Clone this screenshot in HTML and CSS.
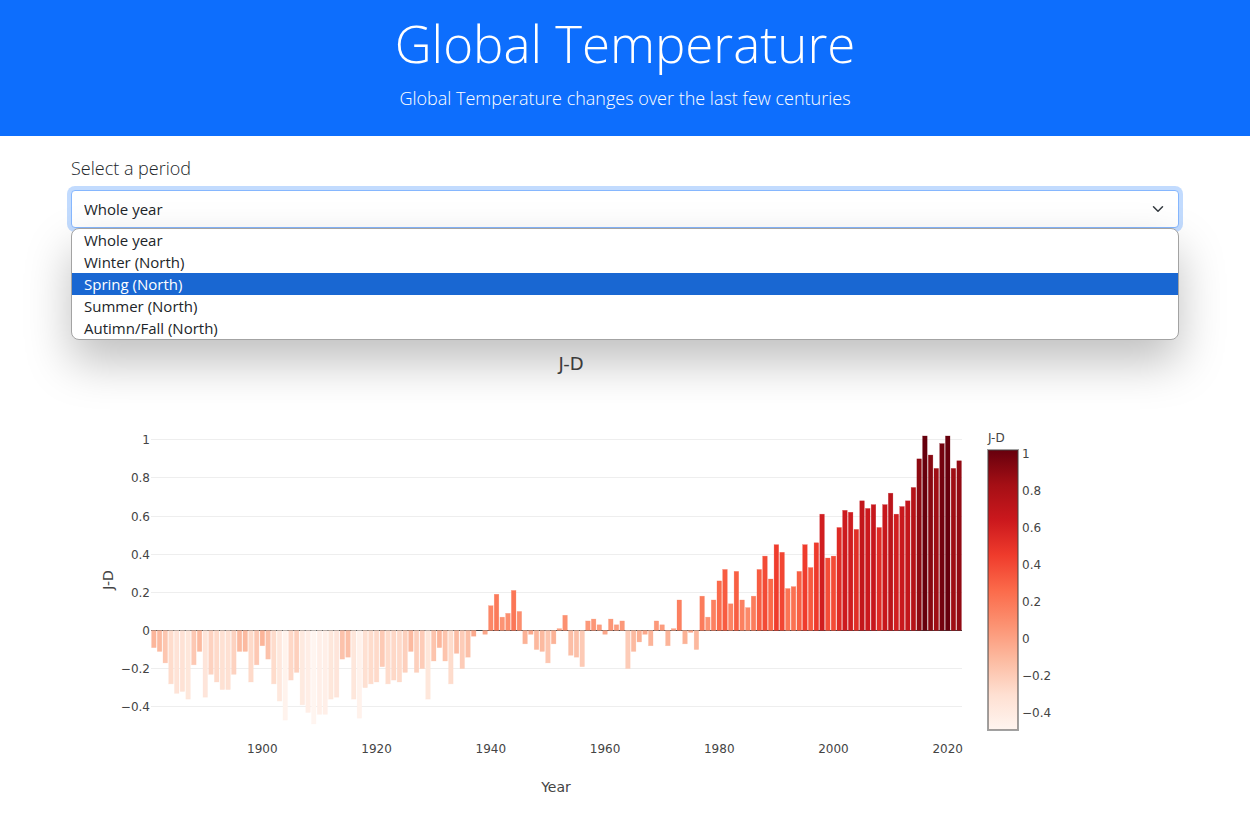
FILE: index.html
```html
<!DOCTYPE html>
<html lang="en">
<head>
  <meta charset="UTF-8" />
  <meta name="viewport" content="width=device-width, initial-scale=1.0" />
  <title>Global Temperature</title>
  <link rel="stylesheet" href="styles.css">
</head>
<body>
  <header class="hero">
    <h1>Global Temperature</h1>
    <p>Global Temperature changes over the last few centuries</p>
  </header>

  <main class="container">
    <label class="period-label" for="period">Select a period</label>
    <div class="period">
      <select id="period" name="period" class="period-select">
        <option selected>Whole year</option>
        <option>Winter (North)</option>
        <option>Spring (North)</option>
        <option>Summer (North)</option>
        <option>Autimn/Fall (North)</option>
      </select>
      <svg class="chevron" viewBox="0 0 16 16" aria-hidden="true"><path d="m2 5 6 6 6-6"/></svg>
      <ul class="options" role="listbox" aria-label="Select a period">
        <li role="option">Whole year</li>
        <li role="option">Winter (North)</li>
        <li role="option" class="active" aria-selected="true">Spring (North)</li>
        <li role="option">Summer (North)</li>
        <li role="option">Autimn/Fall (North)</li>
      </ul>
    </div>

    <svg id="chart" class="chart" viewBox="0 0 1000 500" role="img" aria-label="J-D by year">
      <defs>
        <linearGradient id="reds" x1="0" y1="1" x2="0" y2="0"></linearGradient>
      </defs>
      <text class="chart-title" x="500" y="50">J-D</text>
      <g id="grid"></g>
      <g id="bars"></g>
      <g id="ticks"></g>
      <text class="axis-title" x="485" y="472">Year</text>
      <text class="axis-title" transform="translate(42 260) rotate(-90)">J-D</text>
      <text class="tick" x="917" y="122">J-D</text>
      <rect class="colorbar" x="917" y="130" width="30" height="280" fill="url(#reds)"/>
    </svg>
  </main>

  <script src="chart.js"></script>
</body>
</html>
```
FILE: styles.css
```css
* { box-sizing: border-box; }
body {
  margin: 0;
  font-family: "Open Sans", sans-serif;
  font-size: 15px;
  line-height: 24px;
  color: #212529;
  background: #fff;
}
.hero {
  padding: 8px 16px 24px;
  text-align: center;
  color: #fff;
  background: #0d6efd;
}
.hero h1 {
  margin: 0 0 6px;
  font-size: 51px;
  font-weight: 300;
  line-height: 70px;
}
.hero p {
  margin: 0;
  font-size: 18px;
  font-weight: 300;
  line-height: 28px;
}
.container {
  max-width: 1140px;
  margin: 0 auto;
  padding: 16px 16px 8px;
}
.period-label {
  display: block;
  margin-bottom: 6px;
  font-size: 18px;
  font-weight: 300;
  line-height: 32px;
}
.period {
  position: relative;
  margin-bottom: 92px;
}
.period-select {
  display: block;
  width: 100%;
  height: 38px;
  padding: 0 36px 0 12px;
  font: inherit;
  color: inherit;
  background: #fff;
  border: 1px solid #86b7fe;
  border-radius: 4px;
  outline: 0;
  box-shadow: 0 0 0 4px rgba(13, 110, 253, 0.25);
  appearance: none;
}
.chevron {
  position: absolute;
  top: 13px;
  right: 13px;
  width: 16px;
  height: 12px;
  fill: none;
  stroke: #343a40;
  stroke-width: 2;
  stroke-linecap: round;
  stroke-linejoin: round;
  pointer-events: none;
}
.options {
  position: absolute;
  top: 100%;
  left: 0;
  right: 0;
  margin: 0;
  padding: 0;
  overflow: hidden;
  list-style: none;
  background: #fff;
  border: 1px solid #a3a3a3;
  border-radius: 8px;
  box-shadow: 0 22px 46px rgba(0, 0, 0, 0.25);
}
.options li {
  padding: 0 12px;
  line-height: 22px;
}
.options .active {
  color: #fff;
  background: #1967d2;
}

/* chart */
.chart {
  display: block;
  width: 100%;
  max-width: 1000px;
  font-family: Verdana, "DejaVu Sans", sans-serif;
}
.chart text { fill: #444; }
.chart-title { font-size: 18px; text-anchor: middle; }
.axis-title { font-size: 14px; text-anchor: middle; }
.tick { font-size: 12px; }
.tick-x { text-anchor: middle; }
.tick-y { text-anchor: end; }
.grid-line { stroke: #eee; }
.zero-line { stroke: #444; }
.bar { stroke-width: 0.5; stroke-opacity: 0.5; }
.colorbar { stroke: #444; stroke-opacity: 0.5; stroke-width: 2; }
```
FILE: chart.js
```js
// yearly means (J-D), 1881 - 2022, in 1/100 degree
const firstYear = 1881;
const values = [
  -9, -11, -17, -28, -33, -32, -36, -18, -11, -35,
  -23, -27, -31, -31, -23, -11, -11, -27, -18, -8,
  -15, -28, -37, -47, -26, -22, -39, -43, -49, -44,
  -44, -36, -35, -15, -14, -36, -46, -30, -28, -27,
  -19, -28, -26, -27, -22, -11, -22, -20, -36, -16,
  -9, -16, -28, -12, -20, -14, -3, 0, -2, 13,
  19, 7, 9, 21, 10, -7, -2, -10, -11, -17,
  -7, 1, 8, -13, -14, -19, 5, 6, 3, -2,
  6, 3, 5, -20, -11, -6, -2, -8, 5, 3,
  -8, 1, 16, -7, -1, -10, 18, 7, 16, 26,
  32, 14, 31, 16, 12, 18, 32, 39, 27, 45,
  41, 22, 23, 31, 45, 33, 46, 61, 38, 39,
  54, 63, 62, 53, 68, 64, 66, 54, 66, 72,
  61, 65, 68, 75, 90, 102, 92, 85, 98, 102,
  85, 89
].map(v => v / 100);

const reds = [
  [255, 245, 240], [254, 224, 210], [252, 187, 161], [252, 146, 114], [251, 106, 74],
  [239, 59, 44], [203, 24, 29], [165, 15, 21], [103, 0, 13]
];

const plot = { left: 80, right: 891, zero: 310.5, scale: 190.7 };
const min = Math.min(...values);
const max = Math.max(...values);
const step = (plot.right - plot.left) / values.length;

function add(parent, name, attrs, text) {
  const el = document.createElementNS("http://www.w3.org/2000/svg", name);
  for (const key in attrs) el.setAttribute(key, attrs[key]);
  if (text !== undefined) el.textContent = text;
  parent.appendChild(el);
}

function color(value) {
  const pos = (value - min) / (max - min) * (reds.length - 1);
  const i = Math.min(Math.floor(pos), reds.length - 2);
  const rgb = reds[i].map((c, k) => Math.round(c + (reds[i + 1][k] - c) * (pos - i)));
  return "rgb(" + rgb.join(",") + ")";
}

const grid = document.getElementById("grid");
const bars = document.getElementById("bars");
const ticks = document.getElementById("ticks");

reds.forEach((c, i) => {
  add(document.getElementById("reds"), "stop", {
    offset: i / (reds.length - 1),
    "stop-color": "rgb(" + c.join(",") + ")"
  });
});

for (let i = -2; i <= 5; i++) {
  const v = i / 5;
  const label = String(v).replace("-", "\u2212");
  const y = Math.floor(plot.zero - v * plot.scale) + 0.5;
  add(grid, "line", { class: i ? "grid-line" : "zero-line", x1: plot.left, x2: plot.right, y1: y, y2: y });
  add(ticks, "text", { class: "tick tick-y", x: 79, y: Math.round(y + 4) }, label);
  const barY = 410 - (v - min) / (max - min) * 280;
  add(ticks, "text", { class: "tick", x: 951, y: Math.round(barY + 4) }, label);
}

for (let year = 1900; year <= 2020; year += 20) {
  add(ticks, "text", { class: "tick tick-x", x: plot.left + (year - firstYear + 0.5) * step, y: 433 }, year);
}

values.forEach((v, i) => {
  if (!v) return;
  const h = Math.abs(v) * plot.scale;
  add(bars, "rect", {
    class: "bar",
    x: plot.left + (i + 0.1) * step,
    y: v > 0 ? plot.zero - h : plot.zero,
    width: step * 0.8,
    height: h,
    fill: color(v),
    stroke: color(v)
  });
});
```
